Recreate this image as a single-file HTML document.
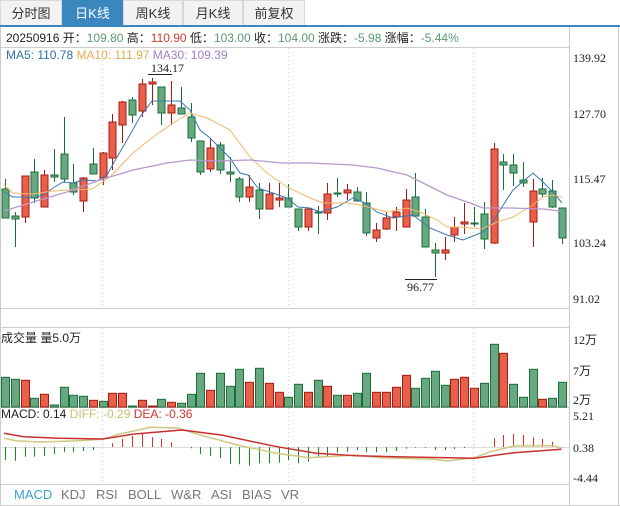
<!DOCTYPE html>
<html><head><meta charset="utf-8"><style>
body{margin:0;width:620px;height:506px;overflow:hidden;background:#fff;font-family:"Liberation Sans","Noto Sans CJK SC",sans-serif;position:relative}
.tab{position:absolute;top:0;height:25px;line-height:25px;text-align:center;font-size:13px;color:#333;background:#f2f2f2;border:1px solid #d8d8d8;border-bottom:none;box-sizing:border-box}
.t{position:absolute;font-size:12px;white-space:nowrap}
.ax{position:absolute;font-family:"Liberation Serif","Noto Sans CJK SC",serif;font-size:12px;color:#222;left:573px}
</style></head><body>
<div class="tab" style="left:0;width:62px">分时图</div>
<div class="tab" style="left:62px;width:61px;background:#3a87c0;color:#fff;border-color:#3a87c0">日K线</div>
<div class="tab" style="left:123px;width:60px">周K线</div>
<div class="tab" style="left:183px;width:60px">月K线</div>
<div class="tab" style="left:243px;width:62px">前复权</div>
<div style="position:absolute;left:0;top:25px;width:620px;height:2px;background:#3a87c0"></div>
<svg id="s" width="620" height="506" style="position:absolute;left:0;top:0"></svg>
<div class="t" style="left:6px;top:29px;font-size:12px;color:#222">20250916 开：<span style="color:#5a9a70">109.80</span> 高：<span style="color:#d03a30">110.90</span> 低：<span style="color:#5a9a70">103.00</span> 收：<span style="color:#5a9a70">104.00</span> 涨跌：<span style="color:#5a9a70">-5.98</span> 涨幅：<span style="color:#5a9a70">-5.44%</span></div>
<div class="t" style="left:6px;top:48px"><span style="color:#3070a8">MA5: 110.78</span> <span style="color:#e8a850">MA10: 111.97</span> <span style="color:#a080c0">MA30: 109.39</span></div>
<div class="t" style="left:151px;top:61px;font-family:'Liberation Serif',serif;color:#222">134.17</div>
<div class="t" style="left:407px;top:280px;font-family:'Liberation Serif',serif;color:#222">96.77</div>
<div class="ax" style="top:51px">139.92</div>
<div class="ax" style="top:107px">127.70</div>
<div class="ax" style="top:172px">115.47</div>
<div class="ax" style="top:236px">103.24</div>
<div class="ax" style="top:292px">91.02</div>
<div class="t" style="left:1px;top:329px;color:#222">成交量 量5.0万</div>
<div class="ax" style="top:331px">12万</div>
<div class="ax" style="top:362px">7万</div>
<div class="ax" style="top:391px">2万</div>
<div class="t" style="left:1px;top:407px;color:#222">MACD: 0.14 <span style="color:#c8c070">DIFF: -0.29</span> <span style="color:#d03030">DEA: -0.36</span></div>
<div class="ax" style="top:409px">5.21</div>
<div class="ax" style="top:441px">0.38</div>
<div class="ax" style="top:471px">-4.44</div>
<div class="t" style="top:487px;font-size:13px;color:#777;left:14px"><span style="color:#3aa0d0">MACD</span></div>
<div class="t" style="top:487px;font-size:13px;color:#777;left:61px">KDJ</div>
<div class="t" style="top:487px;font-size:13px;color:#777;left:96px">RSI</div>
<div class="t" style="top:487px;font-size:13px;color:#777;left:128px">BOLL</div>
<div class="t" style="top:487px;font-size:13px;color:#777;left:171px">W&amp;R</div>
<div class="t" style="top:487px;font-size:13px;color:#777;left:211px">ASI</div>
<div class="t" style="top:487px;font-size:13px;color:#777;left:242px">BIAS</div>
<div class="t" style="top:487px;font-size:13px;color:#777;left:281px">VR</div>
<script>
var C=[[189,218,179,218,'g'],[216,219,212,247,'g'],[176,217,176,223,'r'],[172,198,159,203,'g'],[175,207,170,207,'r'],[175,177,149,182,'g'],[154,179,117,182,'g'],[183,192,164,195,'g'],[178,201,177,212,'r'],[164,174,148,174,'g'],[153,178,152,185,'r'],[122,158,114,170,'r'],[102,125,101,143,'r'],[100,115,97,123,'g'],[84,111,79,117,'r'],[82,84,78,105,'r'],[87,113,87,125,'g'],[105,113,81,125,'r'],[108,114,87,114,'g'],[117,138,103,142,'g'],[141,172,141,175,'g'],[148,169,138,172,'r'],[145,170,142,174,'g'],[172,174,157,182,'g'],[179,197,177,202,'g'],[187,197,175,202,'r'],[190,209,183,219,'g'],[194,209,183,209,'r'],[198,200,183,207,'r'],[198,207,184,207,'g'],[209,227,209,231,'g'],[209,227,209,231,'r'],[212,213,206,234,'g'],[194,213,183,220,'r'],[193,194,178,197,'g'],[190,193,184,200,'r'],[192,201,187,201,'g'],[203,233,192,236,'g'],[230,238,223,242,'r'],[218,229,212,230,'r'],[212,217,207,231,'r'],[200,227,189,227,'r'],[197,216,173,216,'g'],[217,247,209,247,'g'],[250,253,243,277,'g'],[250,253,237,260,'r'],[227,235,217,242,'r'],[222,224,203,234,'r'],[223,224,207,227,'g'],[214,239,202,249,'g'],[149,243,143,244,'r'],[162,165,154,190,'g'],[165,173,154,186,'g'],[180,183,162,187,'g'],[191,222,179,247,'r'],[189,194,178,197,'g'],[191,207,180,208,'g'],[208,238,208,244,'g']];
var V=[172,178,181,235,223,255,202,226,229,241,244,220,220,258,241,258,238,247,250,223,160,211,160,199,148,187,145,190,217,232,193,217,181,199,226,226,220,160,217,217,202,166,205,175,154,196,178,172,205,190,73,100,193,232,148,238,235,187];
var VC="ggrgrggggrgrrgrrgrgggrgggrgrrggrgrgrggrrrrggggrrrggrgggrgggg";
var M=[420,422,410,410,408,402,397,397,393,390,380,370,357,348,340,352,357,367,380,385,402,408,415,432,433,437,430,430,428,420,430,425,410,408,398,395,390,397,397,397,393,386,383,383,390,390,387,384,380,380,355,345,342,345,352,357,365,380];
var h='';
function L(x1,y1,x2,y2,c,d){h+='<line x1="'+x1+'" y1="'+y1+'" x2="'+x2+'" y2="'+y2+'" stroke="'+c+'" stroke-width="1"'+(d?' stroke-dasharray="1,3"':'')+'/>';}
[102,288,473].forEach(function(x){L(x+.5,48,x+.5,308,'#ccc',1);L(x+.5,328,x+.5,485,'#ccc',1);});
L(0,47.5,569,47.5,'#ccc');L(0,308.5,569,308.5,'#ccc');L(0,327.5,569,327.5,'#ccc');L(0,407.5,569,407.5,'#bbb');L(0,484.5,569,484.5,'#ccc');
L(569.5,27,569.5,506,'#ccc');L(618.5,27,618.5,506,'#ccc');L(0.5,27,0.5,506,'#ccc');L(0,505.5,620,505.5,'#ccc');
L(0,447.5,569,447.5,'#ddd');
for(var i=0;i<58;i++){var x=Math.round(5+i*9.77),c=C[i],r=c[4]=='r',f=r?'#e8604c':'#68a880',s=r?'#a81a10':'#1a6e3a';
L(x+.5,c[2],x+.5,c[3],s);var bh=Math.max(c[1]-c[0],1);
h+='<rect x="'+(x-3)+'" y="'+c[0]+'" width="7" height="'+bh+'" fill="'+f+'" stroke="'+s+'" stroke-width="1"/>';
var vy=320+V[i]/3,vr=VC[i]=='r';
h+='<rect x="'+(x-3.5)+'" y="'+vy.toFixed(1)+'" width="8" height="'+(407-vy).toFixed(1)+'" fill="'+(vr?'#e8604c':'#68a880')+'" stroke="'+(vr?'#a81a10':'#1a6e3a')+'" stroke-width="1"/>';
var my=320+M[i]/3;L(x+.5,447,x+.5,my.toFixed(1),my<447?'#e03020':'#1a8a1a');}
function P(pts,c,w){h+='<polyline fill="none" stroke="'+c+'" stroke-width="'+(w||1)+'" points="'+pts+'"/>';}
P('4,192 13,197 23,197 33,198 43,195 53,188 63,182 73,183 83,180 97,181 107,175 117,157 127,140 140,117 152,101 180,101 190,110 200,130 210,138 230,158 240,173 248,175 258,188 270,192 287,198 298,207 310,208 320,212 337,207 353,198 365,203 377,212 393,218 413,215 430,228 447,235 463,240 483,232 492,223 502,207 513,190 533,173 543,182 553,192 562,203','#3a78b0');
P('4,185 13,193 33,194 53,191 67,190 92,189 110,177 133,153 153,137 173,123 190,113 207,118 230,130 250,157 267,173 287,187 310,198 323,203 347,203 360,205 387,212 407,208 420,212 437,220 447,227 460,227 482,229 497,222 513,217 530,207 543,197 553,195 562,197','#f0b868');
P('4,211 33,202 67,192 100,180 133,170 167,163 190,160 217,161 250,160 283,163 310,163 353,165 377,168 407,175 427,185 447,195 470,203 483,208 510,208 543,209 560,211','#b898cc',1.3);
var s=function(a){return a.map(function(p){return (p[0]/2.529).toFixed(1)+','+(320+p[1]/3).toFixed(1)}).join(' ')};
P(s([[10,355],[40,362],[100,366],[200,362],[260,358],[300,343],[380,322],[450,324],[500,343],[600,375],[700,400],[780,413],[900,405],[960,413],[1100,418],[1130,423],[1200,413],[1240,395],[1300,378],[1400,377],[1420,385]]),'#d0c880',1.5);
P(s([[10,340],[60,350],[150,355],[260,357],[340,342],[460,330],[560,345],[700,380],[800,400],[900,407],[1000,410],[1200,415],[1300,398],[1420,388]]),'#c83030',1.5);
L(148,74.5,172,74.5,'#222');L(405,279.5,437,279.5,'#222');
document.getElementById('s').innerHTML=h;
</script>
</body></html>
